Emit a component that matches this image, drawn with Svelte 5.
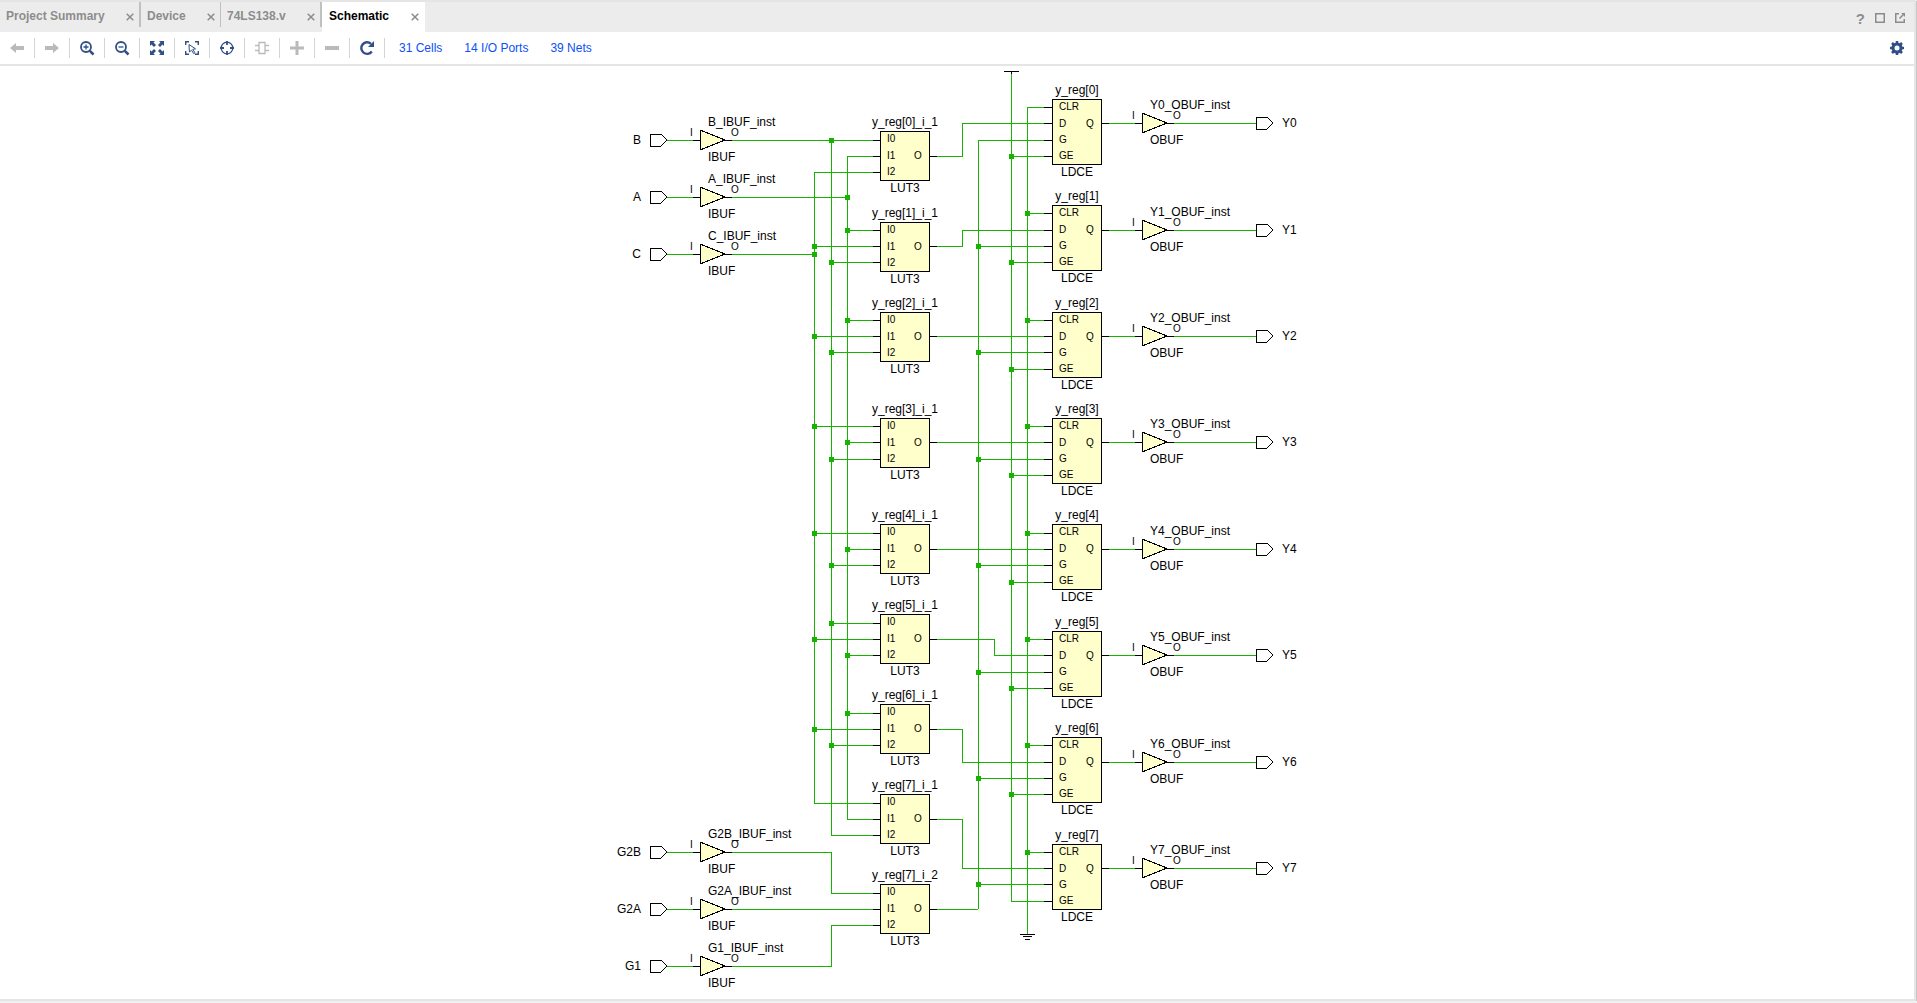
<script>
    let tabs = [
        { name: "Project Summary", width: 141, bar: 2 },
        { name: "Device", width: 80, bar: 1 },
        { name: "74LS138.v", width: 101, bar: 2 },
        { name: "Schematic", width: 103, bar: 0 }
    ];
    let active = "Schematic";

    let tools = [
        { id: "back", label: "Previous", off: true },
        { id: "forward", label: "Next", off: true },
        { id: "zoomin", label: "Zoom In" },
        { id: "zoomout", label: "Zoom Out" },
        { id: "fit", label: "Zoom Fit" },
        { id: "select", label: "Select Area" },
        { id: "auto", label: "Autofit Selection" },
        { id: "cell", label: "Expand Cell", off: true },
        { id: "plus", label: "Expand", off: true },
        { id: "minus", label: "Collapse", off: true },
        { id: "reload", label: "Regenerate" }
    ];
    let links = ["31 Cells", "14 I/O Ports", "39 Nets"];

    // vertical nets of the schematic
    const C = 814;
    const B = 831;
    const A = 847;
    const G = 978;
    const VCC = 1011;
    const GND = 1027;

    let inputs = [
        { name: "B", y: 140, net: "H831" },
        { name: "A", y: 197, net: "H847" },
        { name: "C", y: 254, net: "H814" },
        { name: "G2B", y: 852, net: "H831V893H873" },
        { name: "G2A", y: 909, net: "H873" },
        { name: "G1", y: 966, net: "H831V925H873" }
    ];

    let luts = [
        { name: "y_reg[0]_i_1", top: 131, pins: [140, 156, 172], from: [B, A, C], out: "H962V123H1044" },
        { name: "y_reg[1]_i_1", top: 222, pins: [230, 246, 262], from: [A, C, B], out: "H962V230H1044" },
        { name: "y_reg[2]_i_1", top: 312, pins: [320, 336, 352], from: [A, C, B], out: "H1044" },
        { name: "y_reg[3]_i_1", top: 418, pins: [426, 442, 459], from: [C, A, B], out: "H1044" },
        { name: "y_reg[4]_i_1", top: 524, pins: [533, 549, 565], from: [C, A, B], out: "H1044" },
        { name: "y_reg[5]_i_1", top: 614, pins: [623, 639, 655], from: [B, C, A], out: "H994V655H1044" },
        { name: "y_reg[6]_i_1", top: 704, pins: [713, 729, 745], from: [A, C, B], out: "H962V762H1044" },
        { name: "y_reg[7]_i_1", top: 794, pins: [803, 819, 835], from: [C, A, B], out: "H962V868H1044" },
        { name: "y_reg[7]_i_2", top: 884, pins: [893, 909, 925], from: [], out: "H978" }
    ];

    let latches = [
        { top: 99, pins: [107, 123, 140, 156] },
        { top: 205, pins: [213, 230, 246, 262] },
        { top: 312, pins: [320, 336, 352, 369] },
        { top: 418, pins: [426, 442, 459, 475] },
        { top: 524, pins: [533, 549, 565, 582] },
        { top: 631, pins: [639, 655, 672, 688] },
        { top: 737, pins: [745, 762, 778, 794] },
        { top: 844, pins: [852, 868, 884, 901] }
    ];

    // junction squares
    let dots = [[B, 140], [A, 197], [C, 254]];
    luts.slice(1, 7).forEach(lut => {
        lut.from.forEach((x, i) => dots.push([x, lut.pins[i]]));
    });
    latches.forEach((l, i) => {
        if(i > 0){
            dots.push([GND, l.pins[0]]);
            dots.push([G, l.pins[2]]);
        }
        if(i < 7){
            dots.push([VCC, l.pins[3]]);
        }
    });
</script>

{#snippet buffer(x, y, name, kind)}
    <path class="pin" d="M{x - 7} {y}H{x}M{x + 25} {y}h7" />
    <path class="part" d="M{x} {y - 10}L{x + 25} {y}L{x} {y + 10}Z" />
    <text class="small" x={x - 10} y={y - 4}>I</text>
    <text class="small" x={x + 31} y={y - 4}>O</text>
    <text x={x + 8} y={y - 14}>{name}_{kind}_inst</text>
    <text x={x + 8} y={y + 21}>{kind}</text>
{/snippet}

<div class="panel">
    <header>
        <div class="tabs">
            {#each tabs as tab}
                <div class="tab bar{tab.bar}" class:active={tab.name == active} style="width: {tab.width}px">
                    <button class="name" on:click={() => active = tab.name}>{tab.name}</button>
                    <button class="close" aria-label="Close {tab.name}">
                        <svg width="8" height="8" viewBox="0 0 8 8"><path d="M.7.7l6.6 6.6M7.3.7L.7 7.3" /></svg>
                    </button>
                </div>
            {/each}
        </div>
        <div class="window">
            <button class="help" aria-label="Help">?</button>
            <button aria-label="Maximize">
                <svg width="10" height="10" viewBox="0 0 10 10"><path d="M.75.75h8.5v8.5H.75z" /></svg>
            </button>
            <button aria-label="Float">
                <svg width="10" height="10" viewBox="0 0 10 10"><path d="M4 .75H.75v8.5h8.5V6M4.500 5.500L8 2" /><path class="solid" d="M6 0h4v4z" /></svg>
            </button>
        </div>
    </header>

    <div class="toolbar">
        {#each tools as tool}
            <button class="tool" class:off={tool.off} aria-label={tool.label}>
                <svg width="16" height="16" viewBox="0 0 16 16">
                    {#if tool.id == "back"}
                        <path class="solid" d="M1 8l6-5v3h8v4H7v3z" />
                    {:else if tool.id == "forward"}
                        <path class="solid" d="M15 8L9 3v3H1v4h8v3z" />
                    {:else if tool.id == "zoomin" || tool.id == "zoomout"}
                        <circle cx="7" cy="7" r="5" stroke-width="1.800" />
                        <path d="M10.800 10.800l3.700 3.700" stroke-width="2.500" />
                        <path d={tool.id == "zoomin" ? "M4.500 7h5M7 4.500v5" : "M4.500 7h5"} stroke-width="1.300" />
                    {:else if tool.id == "fit"}
                        <path class="solid" d="M1 1h5L4.500 2.500 7 5 5 7 2.500 4.500 1 6zM15 1h-5l1.500 1.500L9 5l2 2 2.500-2.500L15 6zM1 15h5l-1.500-1.500L7 11 5 9l-2.500 2.500L1 10zM15 15h-5l1.500-1.500L9 11l2-2 2.500 2.500L15 10z" />
                    {:else if tool.id == "select"}
                        <path d="M1.700 5V1.700H5M11 1.700h3.300V5M14.300 11v3.300H11M5 14.300H1.700V11" stroke-width="1.400" />
                        <path d="M5 4.500l6.500 4.300-2.700.5 2.200 3.500-1.400.8-2-3.400L5.400 12z" stroke-width="1" />
                    {:else if tool.id == "auto"}
                        <circle cx="8" cy="8" r="5.800" stroke-width="1.300" />
                        <path d="M8 1v4M8 11v4M1 8h4M11 8h4" stroke-width="1.800" />
                    {:else if tool.id == "cell"}
                        <path d="M5 2.500h6v11H5zM1 5.500h4M1 10.500h4M11 5.500h4M11 10.500h4" stroke-width="1.300" />
                    {:else if tool.id == "plus"}
                        <path d="M8 1v14M1 8h14" stroke-width="3" />
                    {:else if tool.id == "minus"}
                        <path d="M1 8h14" stroke-width="4" />
                    {:else}
                        <path d="M12.800 11.500A5.800 5.800 0 1 1 12 3.800" stroke-width="2.400" />
                        <path class="solid" d="M15 1v6H9z" />
                    {/if}
                </svg>
            </button>
        {/each}
        <nav>
            {#each links as link}
                <a href="#schematic">{link}</a>
            {/each}
        </nav>
        <button class="settings" aria-label="Settings">
            <svg width="14" height="14" viewBox="0 0 14 14">
                <circle cx="7" cy="7" r="4" stroke-width="3" />
                <path d="M7 0v2.500M7 11.500V14M0 7h2.500M11.500 7H14M2 2l2 2M10 10l2 2M12 2l-2 2M4 10l-2 2" stroke-width="2.600" />
            </svg>
        </button>
    </div>

    <main id="schematic">
        <svg class="sheet" width="720" height="930" viewBox="597 66 720 930" role="img" aria-label="Schematic">
            <g class="net">
                <path d="M{C} 172V803M{B} 140V835M{A} 156V819M{G} 140V909M{VCC} 73V901M{GND} 107V934" />
                {#each inputs as input}
                    <path d="M667 {input.y}H693M731 {input.y}{input.net}" />
                {/each}
                {#each luts as lut}
                    <path d="M937 {lut.pins[1]}{lut.out}" />
                    {#each lut.from as x, i}
                        <path d="M{x} {lut.pins[i]}H873" />
                    {/each}
                {/each}
                {#each latches as l}
                    <path d="M{GND} {l.pins[0]}H1044M{G} {l.pins[2]}H1044M{VCC} {l.pins[3]}H1044" />
                    <path d="M1109 {l.pins[1]}H1135M1173 {l.pins[1]}H1256" />
                {/each}
                {#each dots as [x, y]}
                    <rect x={x - 2} y={y - 2} width="4" height="4" />
                {/each}
            </g>

            <path class="pin" d="M1004 71H1019M{VCC} 71V74M1020 934H1035M1023 936H1032M1025 939H1030" />

            {#each inputs as input}
                <path class="port" d="M650 {input.y - 6}h11l6 6l-6 6h-11z" />
                <text class="end" x="641" y={input.y + 4}>{input.name}</text>
                {@render buffer(700, input.y, input.name, "IBUF")}
            {/each}

            {#each luts as lut}
                <rect class="part" x="880" y={lut.top} width="49" height="49" />
                <path class="pin" d="M873 {lut.pins[0]}h7M873 {lut.pins[1]}h7M873 {lut.pins[2]}h7M930 {lut.pins[1]}h7" />
                <text class="mid" x="905" y={lut.top - 5}>{lut.name}</text>
                <text class="mid" x="905" y={lut.top + 61}>LUT3</text>
                <text class="small" x="887" y={lut.top + 11}>I0</text>
                <text class="small" x="887" y={lut.top + 28}>I1</text>
                <text class="small" x="887" y={lut.top + 44}>I2</text>
                <text class="small" x="914" y={lut.top + 28}>O</text>
            {/each}

            {#each latches as l, n}
                <rect class="part" x="1052" y={l.top} width="49" height="65" />
                {#each l.pins as y}
                    <path class="pin" d="M1044 {y}h8" />
                {/each}
                <path class="pin" d="M1102 {l.pins[1]}h7" />
                <text class="mid" x="1077" y={l.top - 5}>y_reg[{n}]</text>
                <text class="mid" x="1077" y={l.top + 77}>LDCE</text>
                <text class="small" x="1059" y={l.top + 11}>CLR</text>
                <text class="small" x="1059" y={l.top + 28}>D</text>
                <text class="small" x="1059" y={l.top + 44}>G</text>
                <text class="small" x="1059" y={l.top + 60}>GE</text>
                <text class="small" x="1086" y={l.top + 28}>Q</text>
                {@render buffer(1142, l.pins[1], "Y" + n, "OBUF")}
                <path class="port" d="M1256 {l.pins[1] - 6}h11l6 6l-6 6h-11z" />
                <text x="1282" y={l.pins[1] + 4}>Y{n}</text>
            {/each}
        </svg>
    </main>
</div>

<style>
    :global(body){
        background: #f0f0f0;
    }
    .panel{
        box-sizing: border-box;
        display: flex;
        flex-direction: column;
        min-height: calc(100vh - 2px);
        margin-right: 1px;
        border-top: 2px solid #e5e5e5;
        border-right: 2px solid #e5e5e5;
        box-shadow: 1px 1px 0 #c8c8c8;
        background: white;
        font-family: "Liberation Sans", Arial, sans-serif;
        font-size: 12px;
    }
    button{
        display: flex;
        align-items: center;
        justify-content: center;
        padding: 0;
        border: 0;
        background: none;
        font: inherit;
        color: inherit;
    }
    svg{
        display: block;
        fill: none;
        stroke: currentColor;
    }
    .solid{
        fill: currentColor;
        stroke: none;
    }

    header{
        display: flex;
        justify-content: space-between;
        height: 30px;
        background: #ececec;
        color: #8c8c8c;
    }
    .tabs{
        display: flex;
    }
    .tab{
        box-sizing: border-box;
        display: flex;
        justify-content: space-between;
        height: 25px;
        padding: 0 4px 0 6px;
        border-right: 0 solid #c0c0c0;
        font-weight: bold;
    }
    .bar1{
        border-right-width: 1px;
    }
    .bar2{
        border-right-width: 2px;
    }
    .active{
        height: 30px;
        padding: 0 5px 5px 7px;
        background: white;
    }
    .active .name{
        color: black;
    }
    .name{
        padding-top: 2px;
    }
    .close{
        width: 10px;
        padding-top: 5px;
    }
    .close svg{
        stroke-width: 1.5;
    }
    .window{
        display: flex;
        align-items: center;
        gap: 10px;
        padding: 2px 9px 0 0;
    }
    .window svg{
        stroke-width: 1.5;
    }
    .help{
        font-size: 15px;
        font-weight: bold;
    }

    .toolbar{
        display: flex;
        align-items: center;
        height: 32px;
        border-bottom: 2px solid #e5e5e5;
    }
    .tool{
        box-sizing: border-box;
        width: 35px;
        height: 20px;
        border-right: 1px solid #d4d4d4;
        color: #2f4f86;
    }
    .off{
        color: #bababa;
    }
    nav{
        display: flex;
        gap: 22px;
        flex: 1;
        padding-left: 14px;
    }
    a{
        color: #0b50f5;
        text-decoration: none;
    }
    .settings{
        margin-right: 10px;
        color: #2f4f86;
    }

    main{
        display: flex;
        flex: 1;
        justify-content: center;
        border-bottom: 2px solid #e5e5e5;
    }
    .sheet{
        shape-rendering: crispEdges;
    }
    .net path{
        stroke: #16b400;
    }
    .net rect{
        fill: #16b400;
        stroke: #16b400;
    }
    .pin{
        stroke: black;
    }
    .part{
        fill: #ffffcc;
        stroke: black;
    }
    .port{
        fill: white;
        stroke: black;
    }
    text{
        fill: black;
        stroke: none;
        font-size: 12px;
    }
    .small{
        font-size: 10px;
    }
    .mid{
        text-anchor: middle;
    }
    .end{
        text-anchor: end;
    }
</style>
